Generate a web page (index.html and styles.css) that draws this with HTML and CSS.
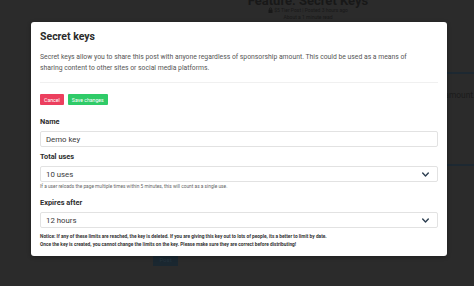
FILE: index.html
```html
<!DOCTYPE html>
<html lang="en">
<head>
  <meta charset="UTF-8">
  <meta name="viewport" content="width=device-width, initial-scale=1.0">
  <title>Secret keys</title>
  <link rel="stylesheet" href="styles.css">
</head>
<body>
  <div class="page">
    <header class="post-head">
      <h1 class="post-title">Feature: Secret Keys</h1>
      <p class="post-meta">
        <svg class="lock" viewBox="0 0 10 12" width="5" height="6" aria-hidden="true"><rect x="1" y="5" width="8" height="7" rx="1" fill="currentColor"/><path d="M3 5V3.5a2 2 0 0 1 4 0V5" fill="none" stroke="currentColor" stroke-width="1.6"/></svg>
        $5 Tier Post | Posted 3 hours ago
      </p>
      <p class="post-meta">About a 1 minute read</p>
    </header>
    <section class="post-body">
      <p>Secret keys allow you to share this post with anyone regardless of sponsorship amount. This could be used as a means of<br>sharing content to other sites or social media platforms.</p>
    </section>
    <button class="post-btn">Post</button>
  </div>

  <div class="modal" role="dialog" aria-labelledby="modal-title">
    <h2 class="modal-title" id="modal-title">Secret keys</h2>
    <p class="modal-desc">Secret keys allow you to share this post with anyone regardless of sponsorship amount. This could be used as a means of sharing content to other sites or social media platforms.</p>
    <hr class="modal-sep">
    <div class="actions">
      <button class="btn btn-red">Cancel</button>
      <button class="btn btn-green">Save changes</button>
    </div>
    <form class="key-form">
      <label class="field">
        <span class="field-label">Name</span>
        <span class="control">Demo key</span>
      </label>
      <label class="field has-help">
        <span class="field-label">Total uses</span>
        <span class="control select">10 uses
          <svg class="chev" viewBox="0 0 10 6" width="7" height="5" aria-hidden="true"><path d="M1 1l4 4 4-4" fill="none" stroke="currentColor" stroke-width="2" stroke-linecap="round" stroke-linejoin="round"/></svg>
        </span>
        <span class="field-help">If a user reloads the page multiple times within 5 minutes, this will count as a single use.</span>
      </label>
      <label class="field">
        <span class="field-label">Expires after</span>
        <span class="control select">12 hours
          <svg class="chev" viewBox="0 0 10 6" width="7" height="5" aria-hidden="true"><path d="M1 1l4 4 4-4" fill="none" stroke="currentColor" stroke-width="2" stroke-linecap="round" stroke-linejoin="round"/></svg>
        </span>
      </label>
      <p class="notice">Notice: If any of these limits are reached, the key is deleted. If you are giving this key out to lots of people, its a better to limit by date.<br>Once the key is created, you cannot change the limits on the key. Please make sure they are correct before distributing!</p>
    </form>
  </div>
</body>
</html>
```

FILE: styles.css
```css
*, *::before, *::after {
  margin: 0;
  padding: 0;
  box-sizing: border-box;
}
html, body {
  height: 100%;
}
body {
  font-family: Roboto, "Liberation Sans", sans-serif;
  background: #2b2b2b;
  overflow: hidden;
  position: relative;
}
.page {
  margin-top: -6px;
  padding-left: 150px;
  width: 1200px;
}
.post-head {
  width: 316px;
  text-align: center;
  color: #181818;
}
.post-title {
  font-size: 13px;
  line-height: 13px;
  font-weight: 700;
}
.post-meta {
  font-size: 5px;
  line-height: 7px;
}
.lock {
  vertical-align: -1px;
}
.post-body {
  margin-top: 51px;
  border-top: 2px solid #1d2831;
  border-bottom: 2px solid #1d2831;
  padding: 16px 0 54px 0;
  color: #1b1b1b;
  font-size: 8.4px;
  line-height: 10px;
  white-space: nowrap;
}
.post-btn {
  display: block;
  margin: 86px 0 0 3px;
  width: 25px;
  height: 14px;
  border: none;
  background: #1a2730;
  color: #26353f;
  font-family: inherit;
  font-size: 6px;
}
.modal {
  position: absolute;
  left: 31px;
  top: 22px;
  width: 416px;
  height: 234px;
  background: #fff;
  border-radius: 3px;
  box-shadow: 0 1px 4px rgba(0, 0, 0, 0.3);
  padding: 8px 9px 0;
  color: #333;
}
.modal-title {
  font-size: 10.5px;
  line-height: 13px;
  font-weight: 700;
  color: #2b2b2b;
}
.modal-desc {
  margin-top: 9px;
  max-width: 380px;
  font-size: 6.8px;
  line-height: 11px;
  color: #555;
}
.modal-sep {
  margin-top: 8px;
  border: none;
  border-top: 1px solid #f0f0f0;
}
.actions {
  display: flex;
  gap: 4px;
  margin-top: 11px;
}
.btn {
  height: 11px;
  padding: 0 4px;
  border: none;
  border-radius: 1px;
  color: #fff;
  font-family: inherit;
  font-size: 5.2px;
}
.btn-red {
  background: #ec3f5e;
}
.btn-green {
  background: #2fcb68;
}
.key-form {
  margin-top: 12px;
  display: flex;
  flex-direction: column;
}
.field {
  display: flex;
  flex-direction: column;
  margin-bottom: 5px;
}
.field.has-help {
  margin-bottom: 8px;
}
.field-label {
  font-size: 7.4px;
  line-height: 10px;
  font-weight: 700;
  color: #2e2e2e;
  margin-bottom: 4px;
}
.control {
  display: flex;
  align-items: center;
  justify-content: space-between;
  height: 16px;
  padding: 0 8px 0 5px;
  border: 1px solid #e2e2e2;
  border-radius: 2px;
  font-size: 7.8px;
  color: #3a3a3a;
}
.chev {
  color: #2c3e50;
}
.field-help {
  margin-top: 2px;
  font-size: 4.8px;
  line-height: 6px;
  color: #666;
}
.notice {
  font-size: 4.8px;
  line-height: 8px;
  font-weight: 700;
  color: #333;
}
```
